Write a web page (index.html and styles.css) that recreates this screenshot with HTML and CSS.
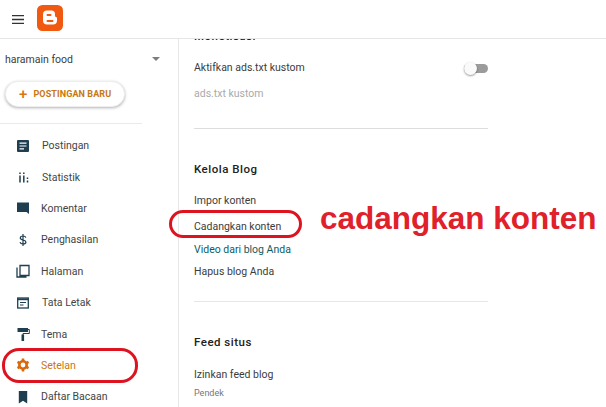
FILE: index.html
```html
<!DOCTYPE html>
<html lang="id">
<head>
<meta charset="utf-8">
<title>Setelan</title>
<link rel="stylesheet" href="styles.css">
</head>
<body>
<div class="app">
  <header class="topbar">
    <svg class="menu" viewBox="0 0 12 9" width="12" height="9"><path d="M0 .7h12M0 4.500h12M0 8.300h12" stroke="#333" stroke-width="1.300"/></svg>
    <svg class="logo" viewBox="0 0 26 26" width="26" height="26">
      <rect width="26" height="26" rx="5.500" fill="#f0590f"/>
      <path d="M10 5.500h4.500a3.500 3.500 0 0 1 3.500 3.500v1.500c0 .8.500 1.500 1 1.500s1 .6 1 1.300v2.200a4 4 0 0 1-4 4H10a4 4 0 0 1-4-4V9.500a4 4 0 0 1 4-4z" fill="#fff"/>
      <rect x="9.500" y="9" width="5" height="2" rx="1" fill="#f0590f"/>
      <rect x="9.500" y="15" width="7" height="2" rx="1" fill="#f0590f"/>
    </svg>
  </header>
  <div class="body">
    <aside class="sidebar">
      <div class="blog"><span>haramain food</span><i class="caret"></i></div>
      <div class="new-wrap"><button class="new"><span class="plus">+</span>POSTINGAN BARU</button></div>
      <hr class="side-rule">
      <nav class="nav">
        <a class="item"><svg viewBox="0 0 14 14"><rect width="12" height="12" x="1" y="1" rx="1" fill="#1f3f50"/><path d="M3.500 4.200h7M3.500 7h7M3.500 9.800h4.500" stroke="#fff" stroke-width="1.200"/></svg><span class="shift">Postingan</span></a>
        <a class="item"><svg viewBox="0 0 14 14"><path d="M4 2.500v1.500M4 5.500v7M7.800 2.500v1.500M7.800 5.500v7M11.500 7.500v1.500M11.500 10.500v2" stroke="#1f3f50" stroke-width="1.500" fill="none"/></svg><span class="shift">Statistik</span></a>
        <a class="item"><svg viewBox="0 0 14 14"><path d="M1 1.500h12v11.500l-2.500-2H1z" fill="#1f3f50"/></svg><span>Komentar</span></a>
        <a class="item"><svg viewBox="0 0 14 14"><path d="M9.800 4.600C9.500 3.400 8.300 3 7 3c-1.500 0-2.700.7-2.700 1.900 0 2.800 5.600 1.400 5.600 4.100 0 1.300-1.300 2-2.900 2-1.500 0-2.700-.7-3-1.900M7 1v12" stroke="#1f3f50" stroke-width="1.200" fill="none"/></svg><span>Penghasilan</span></a>
        <a class="item"><svg viewBox="0 0 14 14"><path d="M4 1.500h9v10H4zM1 3.500v9.500h9.500" stroke="#1f3f50" stroke-width="1.300" fill="none"/></svg><span>Halaman</span></a>
        <a class="item"><svg viewBox="0 0 14 14"><rect x="1.700" y="2" width="10.600" height="10" fill="none" stroke="#1f3f50" stroke-width="1.300"/><path d="M1.700 3.300h10.600" stroke="#1f3f50" stroke-width="1.800"/><path d="M4 6.500h6M4 9h3.500" stroke="#1f3f50" stroke-width="1.200"/></svg><span class="shift">Tata Letak</span></a>
        <a class="item"><svg viewBox="0 0 14 14"><path d="M1.500 1h10.500v4H1.500z" fill="#1f3f50"/><path d="M12 2.500h1.300v4H7v2" stroke="#1f3f50" stroke-width="1" fill="none"/><path d="M5.500 7.500h2.600V14H5.500z" fill="#1f3f50"/></svg><span>Tema</span></a>
        <a class="item active"><svg viewBox="0 0 14 14"><g stroke="#d9690d" stroke-width="2.600"><path d="M7 .6v12.800M1.500 3.800l11 6.400M1.500 10.200l11-6.400"/></g><circle cx="7" cy="7" r="3.700" fill="#fff" stroke="#d9690d" stroke-width="2.600"/></svg><span>Setelan</span></a>
        <a class="item"><svg viewBox="0 0 14 14"><path d="M2.800 1h8.400v12.500L7 10.800l-4.200 2.700z" fill="#1f3f50"/></svg><span>Daftar Bacaan</span></a>
      </nav>
    </aside>
    <main class="main">
      <section class="section first">
        <h2 class="heading">Monetisasi</h2>
        <div class="switch-row">
          <span class="line">Aktifkan ads.txt kustom</span>
          <span class="switch"><i class="knob"></i></span>
        </div>
        <div class="line muted">ads.txt kustom</div>
      </section>
      <section class="section manage">
        <h2 class="heading">Kelola Blog</h2>
        <div class="links">
          <a class="line">Impor konten</a>
          <a class="line backup">Cadangkan konten</a>
          <a class="line teal">Video dari blog Anda</a>
          <a class="line">Hapus blog Anda</a>
        </div>
      </section>
      <section class="section feed">
        <h2 class="heading">Feed situs</h2>
        <div class="line">Izinkan feed blog</div>
        <div class="sub">Pendek</div>
      </section>
    </main>
  </div>
  <i class="oval oval-nav"></i>
  <i class="oval oval-link"></i>
  <div class="note">cadangkan konten</div>
</div>
</body>
</html>
```

FILE: styles.css
```css
html, body { margin: 0; padding: 0; background: #fff; }
.app { position: relative; width: 606px; height: 407px; overflow: hidden; font-family: Roboto, "Liberation Sans", sans-serif; color: #3a3a3a; display: flex; flex-direction: column; }
.topbar { height: 38px; flex: none; border-bottom: 1px solid #e6e6e6; display: flex; align-items: center; gap: 13px; padding-left: 12px; }
.menu { flex: none; }
.logo { flex: none; margin-bottom: 2px; }
.body { flex: 1; display: flex; min-height: 0; }
.sidebar { width: 178px; flex: none; border-right: 1px solid #e8e8e8; overflow: hidden; }
.blog { display: flex; justify-content: space-between; align-items: center; font-size: 10.500px; height: 16px; margin-top: 12px; padding: 0 18px 0 5px; color: #3c3c3c; }
.caret { width: 0; height: 0; border: 4px solid transparent; border-top-color: #7d7d7d; border-bottom: 0; }
.new-wrap { margin: 14px 0 0 5px; }
.new { display: flex; align-items: center; height: 26px; width: 120px; padding: 0 0 0 13px; background: #fff; border: 1px solid #eee; border-radius: 14px; box-shadow: 0 1px 3px rgba(0,0,0,.3); font: 700 9px Roboto, sans-serif; color: #c8780f; letter-spacing: .1px; white-space: nowrap; }
.plus { font-size: 15px; font-weight: 500; color: #d9770f; margin-right: 6px; line-height: 1; }
.side-rule { border: 0; border-top: 1px solid #eaeaea; margin: 16px 36px 0 0; }
.nav { margin-top: 6px; display: flex; flex-direction: column; }
.item { height: 31.400px; display: flex; align-items: center; font-size: 10.500px; color: #444; padding-left: 16px; gap: 11px; flex: none; }
.item svg { width: 14px; height: 14px; flex: none; }
.shift { margin-left: 1px; }
.item.active { color: #c9760f; }
.main { flex: 1; overflow: hidden; padding-left: 15px; min-width: 0; }
.section { width: 294px; }
.heading { margin: 0; font-size: 11.500px; font-weight: 500; color: #222; letter-spacing: .5px; line-height: 16px; }
.first { margin-top: -11px; padding-bottom: 26px; border-bottom: 1px solid #ddd; }
.switch-row { display: flex; justify-content: space-between; align-items: center; margin-top: 16px; }
.line { display: block; font-size: 10.500px; line-height: 16px; color: #3c3c3c; }
.muted { color: #aaa; margin-top: 10px; }
.switch { width: 24px; height: 9px; background: #9b9b9b; border-radius: 5px; position: relative; }
.knob { position: absolute; left: 0; top: -2px; width: 13px; height: 13px; border-radius: 50%; background: #fafafa; box-shadow: 0 1px 2px rgba(0,0,0,.4); }
.manage { margin-top: 32px; padding-bottom: 21px; border-bottom: 1px solid #e6e6e6; }
.links { margin-top: 16px; display: flex; flex-direction: column; gap: 6.500px; }
.backup { margin-top: 3.500px; }
.teal { color: #0d5c63; }
.feed { margin-top: 32px; }
.feed .line { margin-top: 17px; }
.sub { font-size: 9px; color: #777; margin-top: 4px; line-height: 12px; }
.oval { position: absolute; display: block; box-sizing: border-box; border: 3px solid #dd1420; background: transparent; }
.oval-nav { left: 2px; top: 348px; width: 136px; height: 35px; border-radius: 17px; }
.oval-link { left: 169px; top: 210px; width: 133px; height: 28px; border-radius: 14px; }
.note { position: absolute; left: 320px; top: 200px; font: 700 31.500px/36px "Liberation Sans", Arial, sans-serif; color: #e0202a; white-space: nowrap; }
```
